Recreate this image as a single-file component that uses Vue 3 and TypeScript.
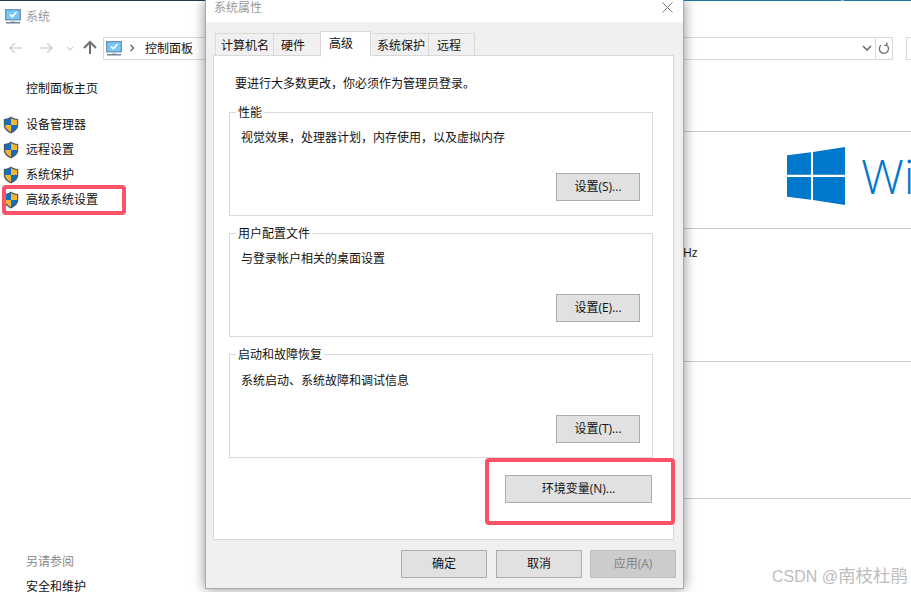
<script setup lang="ts">
const links: string[] = ['设备管理器', '远程设置', '系统保护', '高级系统设置']
const tabs: { label: string; width: number; inset: number; active?: boolean }[] = [
  { label: '计算机名', width: 59, inset: 5 },
  { label: '硬件', width: 47, inset: 7 },
  { label: '高级', width: 51, inset: 8, active: true },
  { label: '系统保护', width: 58, inset: 6 },
  { label: '远程', width: 46, inset: 8 },
]
const groups: { title: string; text: string; button: string }[] = [
  { title: '性能', text: '视觉效果，处理器计划，内存使用，以及虚拟内存', button: '设置(S)...' },
  { title: '用户配置文件', text: '与登录帐户相关的桌面设置', button: '设置(E)...' },
  { title: '启动和故障恢复', text: '系统启动、系统故障和调试信息', button: '设置(T)...' },
]
</script>

<template>
  <div class="desktop">
    <div class="window">
      <div class="strip"></div>
      <div class="titlebar">
        <svg class="monitor" viewBox="0 0 16 15">
          <rect x="0.5" y="0.5" width="15" height="10.5" fill="#4aa8ee" stroke="#7b93a8" />
          <rect x="1.5" y="1.5" width="13" height="8.5" fill="#7cc6f6" />
          <path d="M5 5.5 L7.2 7.8 L11.5 3" fill="none" stroke="#fff" stroke-width="1.5" />
          <rect x="6" y="11" width="4" height="2" fill="#c4ccd4" />
          <rect x="1" y="13" width="14" height="1.5" fill="#6d8296" />
        </svg>
        <span>系统</span>
      </div>
      <div class="nav">
        <svg class="nav-arrows" viewBox="0 0 96 16">
          <path d="M3 8 H15 M8 3 L3 8 L8 13" fill="none" stroke="#d4d4d4" stroke-width="1.6" />
          <path d="M33 8 H45 M40 3 L45 8 L40 13" fill="none" stroke="#d4d4d4" stroke-width="1.6" />
          <path d="M60 7 L63 10 L66 7" fill="none" stroke="#d4d4d4" stroke-width="1.2" />
          <path d="M83 14 V3 M77 8 L83 2 L89 8" fill="none" stroke="#707070" stroke-width="2" />
        </svg>
        <div class="address">
          <svg class="monitor" viewBox="0 0 16 15">
            <rect x="0.5" y="0.5" width="15" height="10.5" fill="#4aa8ee" stroke="#7b93a8" />
            <rect x="1.5" y="1.5" width="13" height="8.5" fill="#7cc6f6" />
            <path d="M5 5.5 L7.2 7.8 L11.5 3" fill="none" stroke="#fff" stroke-width="1.5" />
            <rect x="6" y="11" width="4" height="2" fill="#c4ccd4" />
            <rect x="1" y="13" width="14" height="1.5" fill="#6d8296" />
          </svg>
          <svg class="crumb" viewBox="0 0 6 8"><path d="M1.5 1 L4.5 4 L1.5 7" fill="none" stroke="#666" stroke-width="1.4" /></svg>
          <span class="crumb-text">控制面板</span>
          <span class="spacer"></span>
          <svg class="chevron" viewBox="0 0 10 6"><path d="M1 1 L5 5 L9 1" fill="none" stroke="#6a6a6a" stroke-width="1.6" /></svg>
          <span class="refresh">
            <svg viewBox="0 0 12 13"><path d="M3 3.2 A4.6 4.6 0 1 0 8.6 3 M8.8 0.6 V3.4 H6" fill="none" stroke="#777" stroke-width="1.4" /></svg>
          </span>
        </div>
        <div class="search"></div>
      </div>
      <div class="content">
        <aside class="sidebar">
          <div class="home">控制面板主页</div>
          <ul class="links">
            <li v-for="link in links" :key="link">
              <svg class="shield" viewBox="0 0 16 18">
                <path d="M8 0.6 C10 2.2 12.5 3 15.2 3 V9 C15.2 13 12 15.8 8 17.4 C4 15.8 0.8 13 0.8 9 V3 C3.5 3 6 2.2 8 0.6 Z" fill="#4a5a6c" />
                <path d="M8 2 C6.2 3.2 4.2 3.9 2 4 V9 H8 Z" fill="#0f6fc0" />
                <path d="M8 2 C9.8 3.2 11.8 3.9 14 4 V9 H8 Z" fill="#f7b42c" />
                <path d="M2 9 C2.2 12 4.8 14.5 8 16 V9 Z" fill="#f7b42c" />
                <path d="M14 9 C13.8 12 11.2 14.5 8 16 V9 Z" fill="#0f6fc0" />
              </svg>
              <span>{{ link }}</span>
            </li>
          </ul>
          <div class="see-also">另请参阅</div>
          <div class="security">安全和维护</div>
        </aside>
        <main class="main">
          <section class="sec sec-head"></section>
          <section class="sec sec-logo">
            <svg class="winlogo" viewBox="0 0 58 58">
              <path d="M0 8.2 L24 5.2 V27.8 H0 Z M26 5 L58 0 V27.8 H26 Z M0 30 H24 V52.8 L0 49.8 Z M26 30 H58 V58 L26 53 Z" fill="#0078cc" />
            </svg>
            <span class="wintext">Wi</span>
          </section>
          <section class="sec sec-hz">Hz</section>
          <section class="sec sec-blank"></section>
        </main>
      </div>
    </div>

    <div class="dialog">
      <div class="dlg-title">
        <span>系统属性</span>
        <svg class="close" viewBox="0 0 11 11"><path d="M0.5 0.5 L10.5 10.5 M10.5 0.5 L0.5 10.5" stroke="#777" stroke-width="1" /></svg>
      </div>
      <div class="dlg-body">
        <div class="tabs">
          <div
            v-for="tab in tabs"
            :key="tab.label"
            class="tab"
            :class="{ active: tab.active }"
            :style="{ width: tab.width + 'px', paddingLeft: tab.inset + 'px' }"
          >{{ tab.label }}</div>
        </div>
        <div class="panel">
          <p class="notice">要进行大多数更改，你必须作为管理员登录。</p>
          <div v-for="group in groups" :key="group.title" class="group">
            <div class="legend">{{ group.title }}</div>
            <div class="group-text">{{ group.text }}</div>
            <div class="group-foot"><button class="btn">{{ group.button }}</button></div>
          </div>
          <div class="env-row"><button class="btn env">环境变量(N)...</button></div>
        </div>
        <div class="dlg-foot">
          <button class="btn">确定</button>
          <button class="btn">取消</button>
          <button class="btn off">应用(A)</button>
        </div>
      </div>
    </div>

    <div class="mark mark-side"></div>
    <div class="mark mark-env"></div>
    <div class="watermark">CSDN @<span class="wm-cjk">南枝杜鹃</span></div>
  </div>
</template>

<style scoped>
.desktop {
  position: relative;
  width: 911px;
  height: 592px;
  overflow: hidden;
  background: #fff;
  color: #111;
  font: 12px/17px "Open Sans", "Noto Sans CJK SC", sans-serif;
}
.window { display: flex; flex-direction: column; height: 100%; }
.strip { height: 1px; flex: none; background: linear-gradient(90deg, #243a52 0 210px, #1f78a8 210px 841px, #a8b4ba 841px 844px, #1f78a8 844px); }
.titlebar { display: flex; align-items: center; gap: 5px; height: 30px; flex: none; padding: 0 0 0 5px; box-sizing: border-box; color: #9a9a9a; }
.monitor { width: 16px; height: 15px; flex: none; }
.nav { display: flex; align-items: center; height: 22px; flex: none; margin-top: 6px; padding-left: 7px; }
.nav-arrows { width: 96px; height: 16px; flex: none; }
.address {
  display: flex; align-items: center; box-sizing: border-box; width: 790px; height: 23px; flex: none;
  border: 1px solid #d9d9d9; padding-left: 2px;
}
.crumb { width: 6px; height: 8px; margin: 0 10px 0 7px; flex: none; }
.crumb-text { color: #111; font-size: 12px; }
.spacer { flex: 1; }
.chevron { width: 10px; height: 6px; margin-right: 3px; }
.refresh { display: flex; align-items: center; justify-content: center; width: 16px; height: 21px; border-left: 1px solid #d9d9d9; }
.refresh svg { width: 12px; height: 13px; }
.search { box-sizing: border-box; width: 20px; height: 23px; margin-left: 13px; border: 1px solid #d9d9d9; border-right: 0; flex: none; }
.content { display: flex; flex: 1; min-height: 0; }
.sidebar { display: flex; flex-direction: column; width: 205px; flex: none; }
.home { margin: 21px 0 0 26px; }
.links { list-style: none; margin: 15px 0 0; padding: 0; }
.links li { display: flex; align-items: center; height: 25px; padding-left: 3px; gap: 7px; }
.shield { width: 16px; height: 18px; flex: none; }
.see-also { margin: 341px 0 0 26px; color: #8a8a8a; }
.security { margin: 8px 0 0 26px; }
.main { flex: 1; min-width: 0; }
.sec { box-sizing: border-box; border-bottom: 1px solid #c9c9c9; }
.sec-head { height: 73px; }
.sec-logo { display: flex; align-items: center; height: 97px; padding: 0 0 8px 582px; overflow: hidden; white-space: nowrap; }
.winlogo { width: 58px; height: 58px; flex: none; }
.wintext { margin-left: 16px; color: #0078cc; font: 300 48px/58px "Open Sans", sans-serif; }
.sec-hz { height: 133px; padding: 15px 0 0 478px; }
.sec-blank { height: 137px; }

.dialog {
  position: absolute; left: 205px; top: 0; width: 479px; height: 589px; box-sizing: border-box;
  display: flex; flex-direction: column; background: #f0f0f0;
  border: 1px solid #a9a9a9; border-top: 0; box-shadow: 0 0 12px rgba(0, 0, 0, 0.45);
}
.dlg-title { display: flex; align-items: center; justify-content: space-between; height: 22px; flex: none; padding: 0 10px 8px 8px; background: #fff; color: #9a9a9a; box-sizing: border-box; }
.close { width: 11px; height: 11px; }
.dlg-body { flex: 1; padding: 9px 0 0 7px; }
.tabs { display: flex; align-items: flex-end; height: 25px; padding-left: 2px; margin-bottom: -1px; position: relative; z-index: 1; }
.tab { box-sizing: border-box; height: 23px; border: 1px solid #d9d9d9; border-left: 0; background: #f0f0f0; line-height: 23px; white-space: nowrap; }
.tab:first-child { border-left: 1px solid #d9d9d9; }
.tab.active { height: 26px; background: #fff; border-left: 1px solid #d9d9d9; border-bottom-color: #fff; margin-left: -1px; margin-bottom: -1px; line-height: 24px; }
.panel { box-sizing: border-box; width: 461px; height: 485px; background: #fff; border: 1px solid #d9d9d9; padding: 0 20px 0 15px; }
.notice { margin: 19px 0 20px 6px; }
.group { box-sizing: border-box; height: 104px; margin-bottom: 17px; border: 1px solid #d9d9d9; display: flex; flex-direction: column; }
.legend { width: fit-content; margin: -9px 0 0 6px; padding: 0 2px; background: #fff; }
.group-text { margin: 8px 0 0 11px; }
.group:nth-of-type(3) .group-text { margin-top: 9px; }
.group-foot { margin-top: auto; padding: 0 12px 14px 0; display: flex; justify-content: flex-end; }
.btn {
  box-sizing: border-box; width: 86px; height: 28px; padding: 0 0 2px; background: #e1e1e1;
  border: 1px solid #adadad; border-radius: 0; color: #111; font: inherit;
}
.group-foot .btn { width: 84px; }
.env-row { display: flex; justify-content: flex-end; padding-right: 1px; }
.env { width: 147px; }
.dlg-foot { display: flex; justify-content: flex-end; gap: 9px; padding: 10px 6px 0 0; }
.off { background: #ccc; border-color: #bfbfbf; color: #838383; margin-left: -1px; margin-right: 1px; }

.mark { position: absolute; box-sizing: border-box; border: 4px solid #fb5268; border-radius: 4px; }
.mark-side { left: 2px; top: 185px; width: 124px; height: 30px; }
.mark-env { left: 485px; top: 458px; width: 190px; height: 67px; }
.watermark { position: absolute; left: 772px; top: 565px; color: #bdbdbd; font: 16px/22px "Liberation Sans", "Noto Sans CJK SC", sans-serif; white-space: nowrap; }
.wm-cjk { font-size: 17.5px; }
</style>
